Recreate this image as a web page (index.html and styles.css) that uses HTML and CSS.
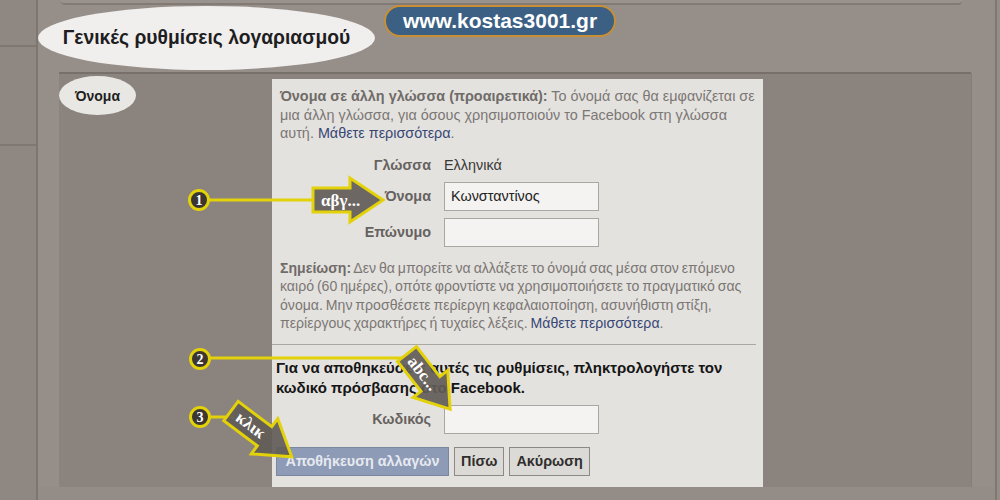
FILE: index.html
```html
<!DOCTYPE html>
<html lang="el">
<head>
<meta charset="utf-8">
<title>Γενικές ρυθμίσεις λογαριασμού</title>
<link rel="stylesheet" href="styles.css">
</head>
<body>
<div class="page">
  <div class="side">
    <div class="side-cell c1"></div>
    <div class="side-cell c2"></div>
    <div class="side-cell c3"></div>
  </div>
  <div class="main">
    <div class="topline"></div>
    <div class="top">
      <div class="title-pill"><h1 class="title">Γενικές ρυθμίσεις λογαριασμού</h1></div>
      <div class="site">www.kostas3001.gr</div>
    </div>
    <div class="section">
      <div class="sec-col"><div class="sec-label">Όνομα</div></div>
      <div class="card">
        <p class="para"><b>Όνομα σε άλλη γλώσσα (προαιρετικά):</b> Το όνομά σας θα εμφανίζεται σε μια άλλη γλώσσα, για όσους χρησιμοποιούν το Facebook στη γλώσσα αυτή. <a class="link">Μάθετε περισσότερα</a>.</p>
        <div class="form">
          <div class="row"><span class="lbl">Γλώσσα</span><span class="val">Ελληνικά</span></div>
          <div class="row"><span class="lbl">Όνομα</span><span class="inp">Κωνσταντίνος</span></div>
          <div class="row"><span class="lbl">Επώνυμο</span><span class="inp"></span></div>
        </div>
        <p class="para note"><b>Σημείωση:</b> Δεν θα μπορείτε να αλλάξετε το όνομά σας μέσα στον επόμενο καιρό (60 ημέρες), οπότε φροντίστε να χρησιμοποιήσετε το πραγματικό σας όνομα. Μην προσθέσετε περίεργη κεφαλαιοποίηση, ασυνήθιστη στίξη, περίεργους χαρακτήρες ή τυχαίες λέξεις. <a class="link">Μάθετε περισσότερα</a>.</p>
        <div class="divider"></div>
        <p class="confirm">Για να αποθηκεύσετε αυτές τις ρυθμίσεις, πληκτρολογήστε τον κωδικό πρόσβασης στο Facebook.</p>
        <div class="row pw"><span class="lbl">Κωδικός</span><span class="inp"></span></div>
        <div class="buttons">
          <span class="btn save">Αποθήκευση αλλαγών</span>
          <span class="btn">Πίσω</span>
          <span class="btn">Ακύρωση</span>
        </div>
      </div>
    </div>
    <div class="bottom"></div>
  </div>
  <div class="rstrip"></div>
</div>

<svg class="notes" width="1000" height="500" viewBox="0 0 1000 500">
  <g class="lines">
    <line x1="208" y1="200" x2="316" y2="200"/>
    <line x1="209" y1="358" x2="410" y2="358"/>
    <line x1="209" y1="417" x2="234" y2="417"/>
  </g>
  <g class="arrow" transform="translate(313 200)">
    <path d="M0 -12 L37 -12 L37 -22 L70 0 L37 22 L37 12 L0 12 Z"/>
    <text x="8" y="6">αβγ...</text>
  </g>
  <g class="arrow" transform="translate(407 354) rotate(52)">
    <path d="M0 -12 L38 -12 L38 -22 L70 0 L38 22 L38 12 L0 12 Z"/>
    <text x="6" y="5">abc...</text>
  </g>
  <g class="arrow" transform="translate(231 411) rotate(37)">
    <path d="M0 -12 L42 -12 L42 -22 L76 0 L42 22 L42 12 L0 12 Z"/>
    <text x="8" y="5">κλικ</text>
  </g>
  <g class="num"><circle cx="199" cy="200" r="9.5"/><text x="199" y="205">1</text></g>
  <g class="num"><circle cx="200" cy="359" r="9.5"/><text x="200" y="364">2</text></g>
  <g class="num"><circle cx="200" cy="417" r="9.5"/><text x="200" y="422">3</text></g>
</svg>
</body>
</html>
```
FILE: styles.css
```css
html, body {
  margin: 0;
  padding: 0;
}
body {
  width: 1000px;
  height: 500px;
  overflow: hidden;
  background: #958d88;
  font-family: "Liberation Sans", Arial, sans-serif;
  position: relative;
}
.page {
  display: flex;
  width: 1000px;
  height: 500px;
}
.side {
  width: 36px;
  flex: none;
  background: #8f8782;
  border-right: 2px solid #7d7570;
  display: flex;
  flex-direction: column;
}
.side-cell {
  border-bottom: 2px solid #7f7772;
}
.c1 { height: 45px; }
.c2 { height: 97px; }
.c3 { flex: 1; border-bottom: none; }

.main {
  flex: 1;
  display: flex;
  flex-direction: column;
  background: #968e89;
}
.topline {
  height: 3px;
  margin: 0 33px 0 23px;
  border-bottom: 2px solid #827a75;
  border-radius: 0 0 4px 4px;
  background: #9a928d;
}
.top {
  height: 67px;
  display: flex;
  align-items: flex-start;
}
.title-pill {
  width: 337px;
  height: 64px;
  margin-top: 1px;
  border-radius: 50%;
  background: #f1efee;
  display: flex;
  align-items: center;
  justify-content: center;
  flex: none;
}
.title {
  margin: 0;
  font-size: 19.3px;
  font-weight: bold;
  color: #1e1e22;
}
.site {
  margin-left: 9px;
  width: 228px;
  height: 28px;
  margin-top: 0;
  border: 2px solid #c88f34;
  border-radius: 16px;
  background: #3c5f84;
  color: #ffffff;
  font-weight: bold;
  font-size: 21px;
  display: flex;
  align-items: center;
  justify-content: center;
  flex: none;
}
.section {
  margin-left: 21px;
  width: 912px;
  height: 413px;
  background: #8a837e;
  border-top: 2px solid #766f6a;
  display: flex;
  box-shadow: 1px 1px 0 #857d78;
}
.sec-col {
  width: 213px;
  flex: none;
  padding-top: 2px;
}
.sec-label {
  width: 77px;
  height: 39px;
  border-radius: 50%;
  background: #e9e7e4;
  display: flex;
  align-items: center;
  justify-content: center;
  font-weight: bold;
  font-size: 14px;
  color: #1e1e22;
}
.card {
  margin-top: 5px;
  width: 478px;
  height: 401px;
  padding: 8px 5px 0 8px;
  background: #e4e2df;
  color: #7b7774;
  font-size: 14.4px;
  line-height: 18.5px;
}
.para {
  margin: 0;
}
.para b {
  color: #6f6b68;
}
.link {
  color: #374775;
}
.form {
  margin-top: 13px;
  display: flex;
  flex-direction: column;
  gap: 7px;
}
.row {
  display: flex;
  align-items: center;
}
.lbl {
  width: 151px;
  text-align: right;
  padding-right: 13px;
  font-weight: bold;
  color: #66625f;
  flex: none;
}
.val {
  color: #3a3836;
  height: 18px;
  margin-bottom: 1px;
}
.inp {
  width: 147px;
  height: 27px;
  border: 1px solid #a9a6a3;
  background: #f4f3f1;
  color: #222;
  padding-left: 6px;
  display: flex;
  align-items: center;
}
.note {
  margin-top: 12px;
  font-size: 14.1px;
  word-spacing: -1px;
}
.divider {
  margin: 11px -5px 0 -8px;
  width: 484px;
  height: 1px;
  background: #aaa7a4;
}
.confirm {
  margin: 13px 0 0 -4px;
  font-size: 15px;
  font-weight: bold;
  color: #151515;
  line-height: 20px;
}
.pw {
  margin-top: 7px;
}
.buttons {
  margin-top: 13px;
  margin-left: -4px;
  display: flex;
  gap: 5px;
}
.btn {
  height: 27px;
  padding: 0 6px;
  border: 1px solid #8d8985;
  background: #dcdad6;
  color: #302e2d;
  font-weight: bold;
  display: flex;
  align-items: center;
}
.save {
  width: 159px;
  justify-content: center;
  background: #8e9bb6;
  border-color: #7a879f;
  color: #e6e9f0;
}
.bottom {
  flex: 1;
  background: #948c87;
}
.rstrip {
  width: 2px;
  flex: none;
  background: #7f7772;
  margin-right: 3px;
}

.notes {
  position: absolute;
  left: 0;
  top: 0;
}
.lines line {
  stroke: #e3d10a;
  stroke-width: 3;
}
.arrow path {
  fill: #625c57;
  fill-opacity: 0.92;
  stroke: #e3d10a;
  stroke-width: 3;
  stroke-linejoin: miter;
}
.arrow text {
  fill: #ffffff;
  font-family: "Liberation Serif", "Times New Roman", serif;
  font-weight: bold;
  font-size: 17px;
}
.num circle {
  fill: #3b3632;
  stroke: #e3d10a;
  stroke-width: 3;
}
.num text {
  fill: #ffffff;
  font-family: "Liberation Serif", serif;
  font-weight: bold;
  font-size: 14px;
  text-anchor: middle;
}
```
